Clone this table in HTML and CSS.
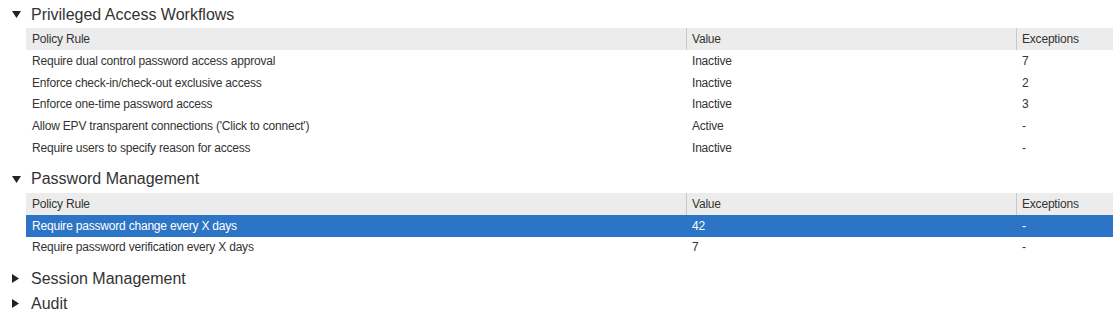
FILE: index.html
```html
<!DOCTYPE html>
<html>
<head>
<meta charset="utf-8">
<link rel="stylesheet" href="styles.css">
</head>
<body>
<div class="page">
  <section class="section expanded">
    <div class="title"><span class="tog"><svg width="9" height="7" viewBox="0 0 9 7"><path d="M0 0H9L4.5 7Z" fill="#222"/></svg></span><span>Privileged Access Workflows</span></div>
    <div class="grid">
      <div class="row head"><div class="cell">Policy Rule</div><div class="cell sep">Value</div><div class="cell sep">Exceptions</div></div>
      <div class="row"><div class="cell">Require dual control password access approval</div><div class="cell">Inactive</div><div class="cell">7</div></div>
      <div class="row"><div class="cell">Enforce check-in/check-out exclusive access</div><div class="cell">Inactive</div><div class="cell">2</div></div>
      <div class="row"><div class="cell">Enforce one-time password access</div><div class="cell">Inactive</div><div class="cell">3</div></div>
      <div class="row"><div class="cell">Allow EPV transparent connections ('Click to connect')</div><div class="cell">Active</div><div class="cell">-</div></div>
      <div class="row"><div class="cell">Require users to specify reason for access</div><div class="cell">Inactive</div><div class="cell">-</div></div>
    </div>
  </section>
  <section class="section expanded">
    <div class="title"><span class="tog"><svg width="9" height="7" viewBox="0 0 9 7"><path d="M0 0H9L4.5 7Z" fill="#222"/></svg></span><span>Password Management</span></div>
    <div class="grid">
      <div class="row head"><div class="cell">Policy Rule</div><div class="cell sep">Value</div><div class="cell sep">Exceptions</div></div>
      <div class="row selected"><div class="cell">Require password change every X days</div><div class="cell">42</div><div class="cell">-</div></div>
      <div class="row"><div class="cell">Require password verification every X days</div><div class="cell">7</div><div class="cell">-</div></div>
    </div>
  </section>
  <section class="section">
    <div class="title"><span class="tog"><svg width="7" height="9" viewBox="0 0 7 9"><path d="M0 0V9L7 4.5Z" fill="#222"/></svg></span><span>Session Management</span></div>
  </section>
  <section class="section">
    <div class="title"><span class="tog"><svg width="7" height="9" viewBox="0 0 7 9"><path d="M0 0V9L7 4.5Z" fill="#222"/></svg></span><span>Audit</span></div>
  </section>
</div>
</body>
</html>
```
FILE: styles.css
```css
html, body {
  margin: 0;
  padding: 0;
  background: #fff;
}
body {
  font-family: "Liberation Sans", Arial, sans-serif;
  color: #333;
  overflow: hidden;
}
.page {
  padding-top: 2px;
}
.title {
  height: 25px;
  display: flex;
  align-items: center;
  font-size: 16px;
  color: #333;
}
.tog {
  width: 31px;
  box-sizing: border-box;
  padding-left: 12px;
  display: flex;
  align-items: center;
}
.tog svg {
  display: block;
}
.expanded {
  margin-bottom: 8px;
}
.grid {
  margin-top: 1px;
  margin-left: 26px;
  width: 1087px;
}
.row {
  display: grid;
  grid-template-columns: 660px 330px 97px;
  height: 21.75px;
  font-size: 12px;
  letter-spacing: -0.2px;
  color: #333;
}
.row.head {
  height: 22px;
  background: #ececec;
}
.row.selected {
  background: #2c74c5;
  color: #fff;
}
.cell {
  display: flex;
  align-items: center;
  padding-left: 6px;
  white-space: nowrap;
  overflow: hidden;
}
.cell.sep {
  border-left: 1px solid #c9c9c9;
  padding-left: 5px;
}
```
